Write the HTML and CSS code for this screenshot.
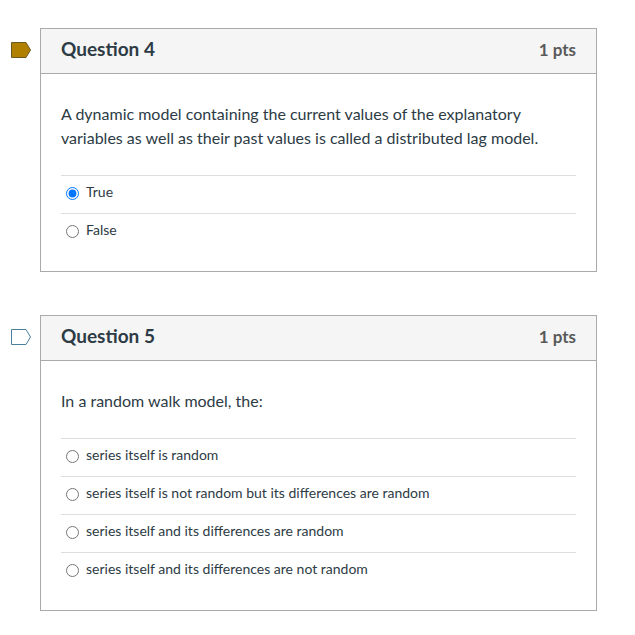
FILE: index.html
```html
<!DOCTYPE html>
<html lang="en">
<head>
	<meta charset="UTF-8">
	<title>Quiz</title>
	<link rel="stylesheet" href="styles.css">
</head>
<body>
	<form class="quiz">
		<div class="row">
			<button type="button" class="flag marked" aria-label="Unflag question 4">
				<svg width="21" height="17" viewBox="0 0 21 17"><path d="M.5.5H15L19.500 8 15 15.500H.5z"/></svg>
			</button>
			<section class="question">
				<div class="header">
					<h2>Question 4</h2>
					<span class="points">1 pts</span>
				</div>
				<div class="text">
					<p id="q4">A dynamic model containing the current values of the explanatory variables as well as their past values is called a distributed lag model.</p>
					<div class="answers" role="radiogroup" aria-labelledby="q4">
						<label class="answer"><input type="radio" name="q4" checked><span>True</span></label>
						<label class="answer"><input type="radio" name="q4"><span>False</span></label>
					</div>
				</div>
			</section>
		</div>

		<div class="row">
			<button type="button" class="flag" aria-label="Flag question 5">
				<svg width="21" height="17" viewBox="0 0 21 17"><path d="M.5.5H15L19.500 8 15 15.500H.5z"/></svg>
			</button>
			<section class="question">
				<div class="header">
					<h2>Question 5</h2>
					<span class="points">1 pts</span>
				</div>
				<div class="text">
					<p id="q5">In a random walk model, the:</p>
					<div class="answers" role="radiogroup" aria-labelledby="q5">
						<label class="answer"><input type="radio" name="q5"><span>series itself is random</span></label>
						<label class="answer"><input type="radio" name="q5"><span>series itself is not random but its differences are random</span></label>
						<label class="answer"><input type="radio" name="q5"><span>series itself and its differences are random</span></label>
						<label class="answer"><input type="radio" name="q5"><span>series itself and its differences are not random</span></label>
					</div>
				</div>
			</section>
		</div>
	</form>
</body>
</html>
```

FILE: styles.css
```css
* {
	box-sizing: border-box;
}

body {
	margin: 0;
	background: #fff;
	color: #2d3b45;
	font-family: Lato, "Liberation Sans", sans-serif;
	font-size: 16px;
	line-height: 24px;
}

.quiz {
	padding: 28px 38px 24px 11px;
}

.row {
	display: flex;
	align-items: flex-start;
	margin-bottom: 43px;
}

.row:last-child {
	margin-bottom: 0;
}

.flag {
	flex: none;
	width: 29px;
	margin-top: 14px;
	padding: 0;
	border: 0;
	background: none;
	text-align: left;
	cursor: pointer;
}

.flag svg {
	display: block;
	fill: #fff;
	stroke: #4a7f9d;
}

.flag.marked svg {
	fill: #b08000;
	stroke: #6b5a20;
}

.question {
	flex: 1;
	border: 1px solid #aaa;
}

.header {
	display: flex;
	justify-content: space-between;
	align-items: baseline;
	padding: 8px 20px 11px;
	background: #f5f5f5;
	border-bottom: 1px solid #aaa;
}

.header h2 {
	margin: 0;
	font-size: 19px;
	font-weight: bold;
}

.points {
	color: #595959;
	font-size: 17px;
	font-weight: bold;
}

.text {
	padding: 28px 20px 20px;
}

.text p {
	margin: 0 0 25px;
}

.answer {
	display: flex;
	align-items: flex-start;
	height: 38px;
	padding: 6px 0 0 5px;
	border-top: 1px solid #ddd;
	font-size: 14px;
	line-height: 20px;
}

.answer input {
	width: 13px;
	height: 13px;
	margin: 5px 7px 0 0;
}
```
